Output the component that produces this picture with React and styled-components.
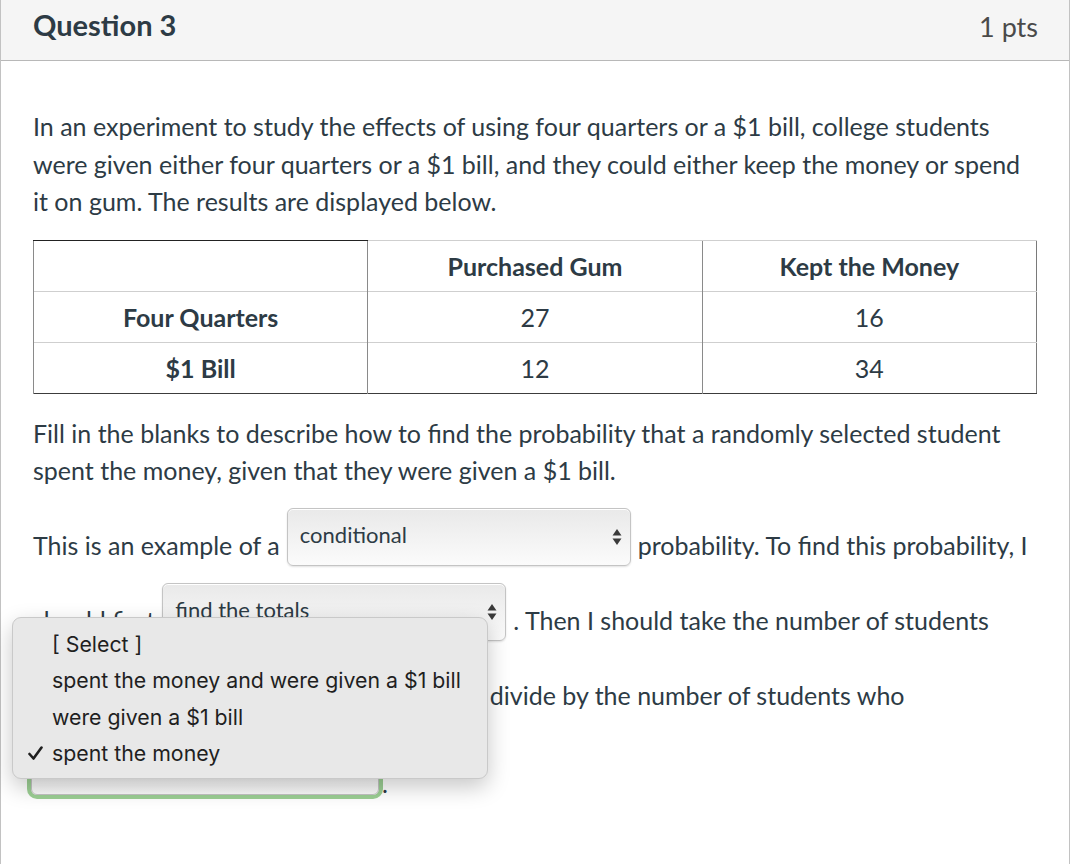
import React from "react";
import styled, { createGlobalStyle } from "styled-components";

const GlobalStyle = createGlobalStyle`
  html, body {
    margin: 0;
    padding: 0;
    background: #ffffff;
  }
  body {
    font-family: "Lato", "Open Sans", sans-serif;
    color: #2d3b45;
  }
`;

const Page = styled.div`
  position: relative;
  width: 1068px;
  min-height: 864px;
  border-left: 1px solid #c2c2c2;
  border-right: 1px solid #c2c2c2;
  background: #fff;
`;

const Header = styled.div`
  box-sizing: border-box;
  height: 61px;
  display: flex;
  align-items: center;
  justify-content: space-between;
  padding: 0 31px 11px 32px;
  background: #f5f5f5;
  border-bottom: 1px solid #b8b8b8;
`;

const QuestionName = styled.h2`
  margin: 0;
  font-size: 29px;
  font-weight: 700;
  color: #2d3b45;
`;

const Points = styled.span`
  margin-top: 4px;
  font-size: 27px;
  font-weight: 400;
  color: #4a4a4a;
`;

const Content = styled.div`
  padding: 47px 32px 0 32px;
  font-size: 25px;
`;

const Para = styled.p`
  margin: 0;
  line-height: 37.5px;
`;

const Table = styled.table`
  margin: 19px 0 21px 0;
  width: 1004px;
  border-collapse: collapse;
  font-size: 25px;
  table-layout: fixed;
  border-left: 1px solid #7a7a7a;
  border-right: 1px solid #7a7a7a;
  border-bottom: 1px solid #3c3c3c;
`;

const Cell = styled.td`
  height: 50px;
  padding: 0;
  text-align: center;
  font-weight: ${(p) => (p.$bold ? 700 : 400)};
  border-top: 1px solid ${(p) => (p.$dark ? "#222" : "#cfcfcf")};
  border-left: 1px solid #8a8a8a;
`;

const Lines = styled.div`
  margin-top: 18px;
`;

const Line = styled.div`
  display: flex;
  align-items: flex-start;
  height: 75px;
  white-space: nowrap;
`;

const Words = styled.span`
  line-height: 75px;
  padding-top: ${(p) => p.$drop || 0}px;
`;

const Select = styled.div`
  position: relative;
  box-sizing: border-box;
  width: ${(p) => p.$width}px;
  height: 58px;
  margin: ${(p) => (p.$focus ? "4px 3px 0 -2px" : "0 7px")};
  padding: 14px 0 0 12px;
  font-size: 22px;
  line-height: 24px;
  color: #2d3b45;
  border: 1px solid #c4c4c4;
  border-radius: 6px;
  background: linear-gradient(#e9e9e9, #fbfbfb);
  box-shadow: ${(p) =>
    p.$focus
      ? "0 0 0 4px #9ccf94, inset 0 1px 0 #fff"
      : "0 1px 2px rgba(0,0,0,0.12), inset 0 1px 0 #fff"};
`;

const Arrows = styled.svg`
  position: absolute;
  right: 8px;
  top: 19px;
`;

const Menu = styled.div`
  position: absolute;
  left: 11px;
  top: 617px;
  width: 476px;
  box-sizing: border-box;
  padding: 8px 0 7px 0;
  background: #e8e8e8;
  border: 1px solid #c9c9c9;
  border-radius: 9px;
  box-shadow: 0 8px 22px rgba(0, 0, 0, 0.22);
  font-family: "Inter", "Noto Sans", sans-serif;
  font-size: 21.3px;
  color: #1f1f1f;
`;

const MenuItem = styled.div`
  position: relative;
  height: 36.3px;
  line-height: 36.3px;
  padding-left: 39px;
`;

const Check = styled.svg`
  position: absolute;
  left: 15px;
  top: 11px;
`;

const SelectBox = ({ width, focus, children }) => (
  <Select $width={width} $focus={focus}>
    {children}
    <Arrows width="10" height="18" viewBox="0 0 10 18">
      <path d="M5 1 L9.5 7.5 L0.5 7.5 Z" fill="#3a3a3a" />
      <path d="M5 17 L9.5 10.5 L0.5 10.5 Z" fill="#3a3a3a" />
    </Arrows>
  </Select>
);

const rows = [
  ["Four Quarters", "27", "16"],
  ["$1 Bill", "12", "34"],
];

const options = [
  "[ Select ]",
  "spent the money and were given a $1 bill",
  "were given a $1 bill",
  "spent the money",
];

const App = () => {
  return (
    <Page>
      <GlobalStyle />
      <Header>
        <QuestionName>Question 3</QuestionName>
        <Points>1 pts</Points>
      </Header>
      <Content>
        <Para>
          In an experiment to study the effects of using four quarters or a $1
          bill, college students were given either four quarters or a $1 bill,
          and they could either keep the money or spend it on gum. The results
          are displayed below.
        </Para>
        <Table>
          <tbody>
            <tr>
              <Cell $dark />
              <Cell $bold>Purchased Gum</Cell>
              <Cell $bold>Kept the Money</Cell>
            </tr>
            {rows.map((r) => (
              <tr key={r[0]}>
                <Cell $bold>{r[0]}</Cell>
                <Cell>{r[1]}</Cell>
                <Cell>{r[2]}</Cell>
              </tr>
            ))}
          </tbody>
        </Table>
        <Para>
          Fill in the blanks to describe how to find the probability that a
          randomly selected student spent the money, given that they were given
          a $1 bill.
        </Para>
        <Lines>
          <Line>
            <Words>This is an example of a</Words>
            <SelectBox width={344}>conditional</SelectBox>
            <Words>probability. To find this probability, I</Words>
          </Line>
          <Line>
            <Words>should first</Words>
            <SelectBox width={344}>find the totals</SelectBox>
            <Words>. Then I should take the number of students</Words>
          </Line>
          <Line>
            <SelectBox width={396}>were given a $1 bill</SelectBox>
            <Words>and divide by the number of students who</Words>
          </Line>
          <Line>
            <SelectBox width={348} focus>
              spent the money
            </SelectBox>
            <Words $drop={13}>.</Words>
          </Line>
        </Lines>
      </Content>
      <Menu>
        {options.map((o, i) => (
          <MenuItem key={o}>
            {i === options.length - 1 && (
              <Check width="15" height="15" viewBox="0 0 15 15">
                <path
                  d="M1.5 8 L5.5 12.5 L13.5 1.5"
                  fill="none"
                  stroke="#1f1f1f"
                  strokeWidth="2.6"
                  strokeLinecap="round"
                  strokeLinejoin="round"
                />
              </Check>
            )}
            {o}
          </MenuItem>
        ))}
      </Menu>
    </Page>
  );
};

export default App;
